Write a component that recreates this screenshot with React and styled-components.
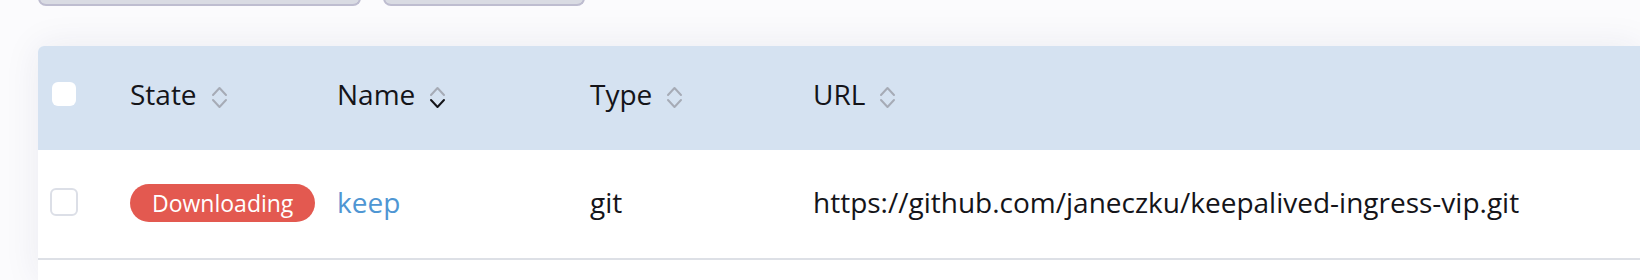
import React from "react";
import styled, { createGlobalStyle } from "styled-components";

const Global = createGlobalStyle`
  html, body { margin: 0; padding: 0; }
  body {
    background: #fbfbfd;
    font-family: "Open Sans", "Noto Sans", sans-serif;
    color: #141419;
    overflow: hidden;
  }
`;

const Page = styled.div`
  box-sizing: border-box;
  width: 1640px;
  height: 280px;
  padding-left: 38px;
  display: flex;
  flex-direction: column;
  overflow: hidden;
`;

const Toolbar = styled.div`
  display: flex;
  gap: 22px;
  margin-top: -30px;
  flex: none;
`;

const ToolButton = styled.div`
  width: ${(p) => p.$w}px;
  height: 36px;
  box-sizing: border-box;
  background: #d9dbe3;
  border: 2px solid #bebdd0;
  border-top: none;
  border-radius: 0 0 8px 8px;
`;

const Table = styled.div`
  margin-top: 40px;
  flex: 1;
  background: #ffffff;
  border-radius: 6px 0 0 0;
  box-shadow: 0 0 36px rgba(40, 40, 90, 0.08);
`;

const cols = "92px 207px 253px 223px 1fr";

const HeaderRow = styled.div`
  display: grid;
  grid-template-columns: ${cols};
  align-items: center;
  height: 104px;
  box-sizing: border-box;
  padding-bottom: 8px;
  background: #d5e2f1;
  border-radius: 6px 0 0 0;
`;

const BodyRow = styled.div`
  display: grid;
  grid-template-columns: ${cols};
  align-items: center;
  height: 110px;
  box-sizing: border-box;
  padding-bottom: 4px;
  border-bottom: 2px solid #dde0e6;
`;

const CheckCell = styled.div`
  width: 52px;
  display: flex;
  justify-content: center;
`;

const Checkbox = styled.span`
  display: block;
  box-sizing: border-box;
  width: ${(p) => (p.$header ? 24 : 28)}px;
  height: ${(p) => (p.$header ? 24 : 28)}px;
  border-radius: 6px;
  background: #fff;
  border: ${(p) => (p.$header ? "none" : "2px solid #dcdfe7")};
`;

const HeadCell = styled.div`
  display: flex;
  align-items: center;
  gap: 14px;
  font-size: 28px;
  line-height: 38px;
  color: #141419;
  white-space: nowrap;
`;

const Cell = styled.div`
  font-size: 28px;
  line-height: 38px;
  color: #141419;
  white-space: nowrap;
`;

const LinkText = styled.a`
  color: #4f96d3;
  text-decoration: none;
`;

const Badge = styled.span`
  display: inline-flex;
  align-items: center;
  height: 38px;
  padding: 0 22px;
  border-radius: 19px;
  background: #e35950;
  color: #fff;
  font-size: 23px;
  font-weight: 500;
  line-height: 1;
`;

const SortSvg = styled.svg`
  display: block;
  margin-top: 6px;
`;

function SortIcon({ dir }) {
  const up = dir === "up" ? "#141419" : "#a6abb6";
  const down = dir === "down" ? "#141419" : "#a6abb6";
  return (
    <SortSvg width="17" height="23" viewBox="0 0 17 23" fill="none">
      <path d="M2 9 L8.5 2 L15 9" stroke={up} strokeWidth="2" strokeLinecap="round" strokeLinejoin="round" />
      <path d="M2 14 L8.5 21 L15 14" stroke={down} strokeWidth="2" strokeLinecap="round" strokeLinejoin="round" />
    </SortSvg>
  );
}

const headers = [
  { label: "State" },
  { label: "Name", dir: "down" },
  { label: "Type" },
  { label: "URL" },
];

export default function App() {
  return (
    <>
      <Global />
      <Page>
        <Toolbar>
          <ToolButton $w={323} />
          <ToolButton $w={202} />
        </Toolbar>
        <Table>
          <HeaderRow>
            <CheckCell>
              <Checkbox $header />
            </CheckCell>
            {headers.map((h) => (
              <HeadCell key={h.label}>
                {h.label}
                <SortIcon dir={h.dir} />
              </HeadCell>
            ))}
          </HeaderRow>
          <BodyRow>
            <CheckCell>
              <Checkbox />
            </CheckCell>
            <Cell>
              <Badge>Downloading</Badge>
            </Cell>
            <Cell>
              <LinkText href="#">keep</LinkText>
            </Cell>
            <Cell>git</Cell>
            <Cell>https://github.com/janeczku/keepalived-ingress-vip.git</Cell>
          </BodyRow>
        </Table>
      </Page>
    </>
  );
}
